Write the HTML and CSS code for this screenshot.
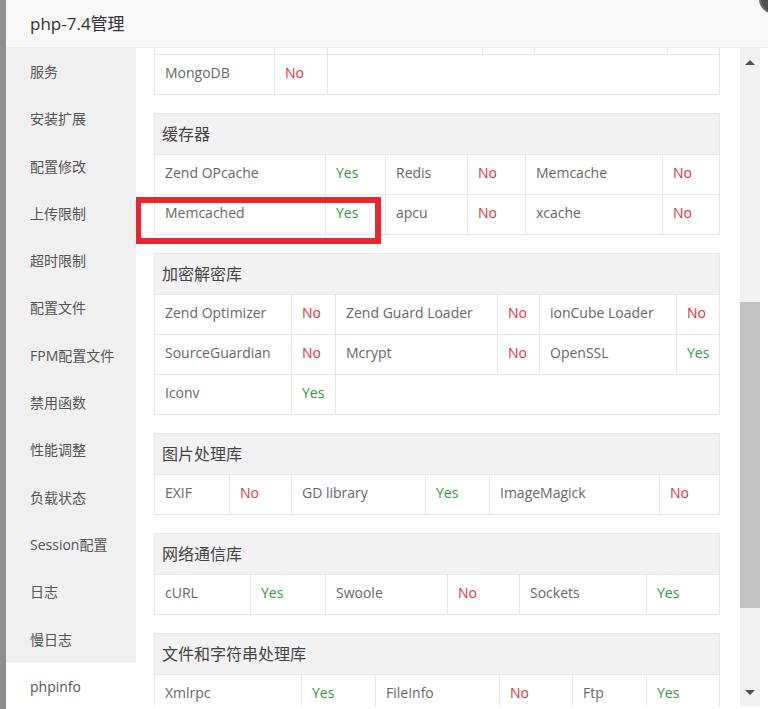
FILE: index.html
```html
<!DOCTYPE html>
<html lang="zh">
<head>
    <meta charset="UTF-8">
    <meta name="viewport" content="width=device-width, initial-scale=1.0">
    <title>php-7.4管理</title>
    <link rel="stylesheet" href="styles.css">
</head>
<body>
    <div class="layer">
        <div class="layer-title">php-7.4管理</div>
        <span class="layer-close"></span>
        <div class="layer-body">
            <ul class="side-menu">
                <li>服务</li>
                <li>安装扩展</li>
                <li>配置修改</li>
                <li>上传限制</li>
                <li>超时限制</li>
                <li>配置文件</li>
                <li>FPM配置文件</li>
                <li>禁用函数</li>
                <li>性能调整</li>
                <li>负载状态</li>
                <li>Session配置</li>
                <li>日志</li>
                <li>慢日志</li>
                <li class="active">phpinfo</li>
            </ul>
            <div class="main">
                <div class="scroll-view">
                    <div class="info-list">
                        <!-- scrolled past: only the last rows show -->
                        <div class="info-table cols-db">
                            <div class="th"></div>
                            <div class="td"></div><div class="td"></div>
                            <div class="td"></div><div class="td"></div>
                            <div class="td"></div><div class="td"></div>
                            <div class="td">MongoDB</div><div class="td no">No</div>
                            <div class="td span-4"></div>
                        </div>

                        <div class="info-table cols-cache">
                            <div class="th">缓存器</div>
                            <div class="td">Zend OPcache</div><div class="td yes">Yes</div>
                            <div class="td">Redis</div><div class="td no">No</div>
                            <div class="td">Memcache</div><div class="td no">No</div>
                            <div class="td">Memcached</div><div class="td yes">Yes</div>
                            <div class="td">apcu</div><div class="td no">No</div>
                            <div class="td">xcache</div><div class="td no">No</div>
                            <div class="mark"></div>
                        </div>

                        <div class="info-table cols-crypt">
                            <div class="th">加密解密库</div>
                            <div class="td">Zend Optimizer</div><div class="td no">No</div>
                            <div class="td">Zend Guard Loader</div><div class="td no">No</div>
                            <div class="td">ionCube Loader</div><div class="td no">No</div>
                            <div class="td">SourceGuardian</div><div class="td no">No</div>
                            <div class="td">Mcrypt</div><div class="td no">No</div>
                            <div class="td">OpenSSL</div><div class="td yes">Yes</div>
                            <div class="td">Iconv</div><div class="td yes">Yes</div>
                            <div class="td span-4"></div>
                        </div>

                        <div class="info-table cols-image">
                            <div class="th">图片处理库</div>
                            <div class="td">EXIF</div><div class="td no">No</div>
                            <div class="td">GD library</div><div class="td yes">Yes</div>
                            <div class="td">ImageMagick</div><div class="td no">No</div>
                        </div>

                        <div class="info-table cols-net">
                            <div class="th">网络通信库</div>
                            <div class="td">cURL</div><div class="td yes">Yes</div>
                            <div class="td">Swoole</div><div class="td no">No</div>
                            <div class="td">Sockets</div><div class="td yes">Yes</div>
                        </div>

                        <div class="info-table cols-file">
                            <div class="th">文件和字符串处理库</div>
                            <div class="td">Xmlrpc</div><div class="td yes">Yes</div>
                            <div class="td">FileInfo</div><div class="td no">No</div>
                            <div class="td">Ftp</div><div class="td yes">Yes</div>
                        </div>
                    </div>
                </div>
                <div class="scrollbar">
                    <span class="arrow up"></span>
                    <div class="track"><div class="thumb"></div></div>
                    <span class="arrow down"></span>
                </div>
            </div>
        </div>
    </div>
</body>
</html>
```

FILE: styles.css
```css
* {
    box-sizing: border-box;
}

html, body {
    height: 100%;
}

body {
    margin: 0;
    background-color: #8e8e8e;
    font-family: "Open Sans", "Noto Sans CJK SC", sans-serif;
    overflow: hidden;
}

.layer {
    position: relative;
    margin-left: 6px;
    height: 100%;
    background: #fff;
    display: flex;
    flex-direction: column;
}

.layer-title {
    height: 48px;
    line-height: 47px;
    padding-left: 24px;
    background-color: #f8f8f8;
    border-bottom: 1px solid #eee;
    font-size: 17px;
    color: #333;
    flex-shrink: 0;
}

.layer-close {
    position: absolute;
    left: 753px;
    top: -16px;
    width: 30px;
    height: 30px;
    border-radius: 50%;
    background-color: #4f4f4f;
    border: 2px solid #6a6a6a;
}

.layer-body {
    flex: 1;
    display: flex;
    min-height: 0;
}

/* left menu */
.side-menu {
    list-style: none;
    margin: 0;
    padding: 0;
    width: 130px;
    flex-shrink: 0;
    background-color: #f0f0f0;
}

.side-menu li {
    height: 47.3px;
    line-height: 47.3px;
    padding-left: 24px;
    font-size: 14px;
    color: #555;
    white-space: nowrap;
}

.side-menu li.active {
    background-color: #fff;
}

/* right content */
.main {
    flex: 1;
    display: flex;
    min-width: 0;
    padding-bottom: 3px;
}

.scroll-view {
    flex: 1;
    overflow: hidden;
}

.info-list {
    width: 584px;
    padding-left: 18px;
    margin-top: -75px;
    display: flex;
    flex-direction: column;
    gap: 18px;
}

.info-table {
    position: relative;
    display: grid;
    gap: 1px;
    background-color: #e6e6e6;
    border: 1px solid #e6e6e6;
}

.cols-db    { grid-template-columns: 119px 52px 154px 51px 132px 1fr; }
.cols-cache { grid-template-columns: 170px 59px 81px 57px 136px 1fr; }
.cols-crypt { grid-template-columns: 136px 43px 161px 41px 136px 1fr; }
.cols-image { grid-template-columns: 74px 61px 133px 63px 169px 1fr; }
.cols-net   { grid-template-columns: 95px 74px 121px 71px 126px 1fr; }
.cols-file  { grid-template-columns: 146px 73px 123px 72px 73px 1fr; }

.info-table .th {
    grid-column: 1 / -1;
    height: 40px;
    line-height: 40px;
    padding-left: 7px;
    background-color: #f2f2f2;
    font-size: 16px;
    color: #444;
}

.info-table .td {
    height: 39px;
    line-height: 35px;
    padding: 0 10px;
    background-color: #fff;
    font-size: 14px;
    color: #666;
    white-space: nowrap;
}

.info-table .td.span-4 {
    grid-column: span 4;
}

.td.yes {
    color: #2f9a3a;
}

.td.no {
    color: #e0323c;
}

/* red highlight drawn over the Memcached row */
.mark {
    position: absolute;
    left: -20px;
    top: 83px;
    width: 246px;
    height: 47px;
    border: 6px solid #e8262d;
}

/* fake scrollbar */
.scrollbar {
    width: 20px;
    margin-right: 8px;
    background-color: #f1f1f1;
    display: flex;
    flex-direction: column;
}

.scrollbar .arrow {
    height: 28px;
    display: flex;
    align-items: center;
    justify-content: center;
}

.scrollbar .arrow::before {
    content: "";
    border-left: 5px solid transparent;
    border-right: 5px solid transparent;
}

.scrollbar .arrow.up::before {
    border-bottom: 5px solid #505050;
}

.scrollbar .arrow.down::before {
    border-top: 5px solid #505050;
}

.scrollbar .track {
    flex: 1;
}

.scrollbar .thumb {
    margin-top: 226px;
    height: 306px;
    background-color: #c1c1c1;
}
```
